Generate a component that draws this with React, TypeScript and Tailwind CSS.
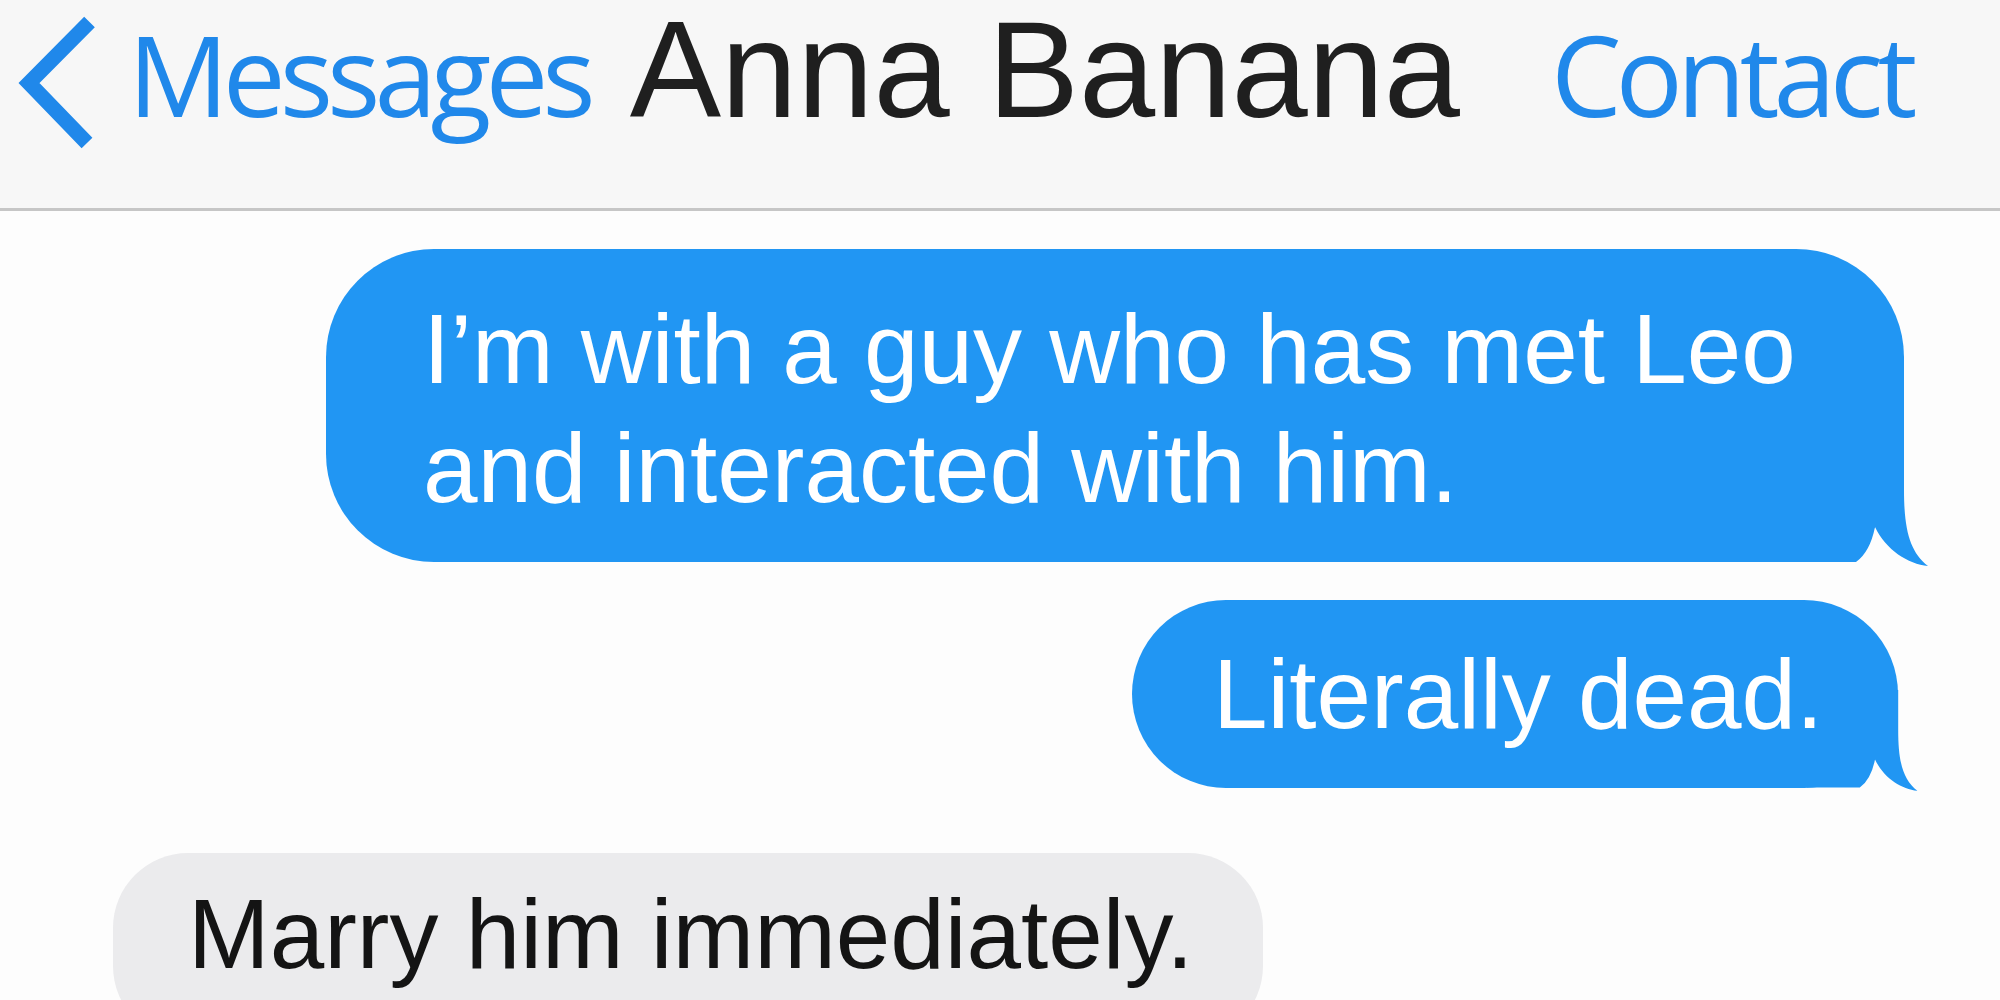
import React from 'react';

const sans = "font-['Liberation_Sans',Arial,sans-serif]";
const ui = "font-['Open_Sans',sans-serif] text-[112px] leading-[1.3] tracking-[-6px] text-[#2088ea]";

// iMessage style tail, drawn in a 140x130 box whose point (114,122) sits on the bubble's bottom-right corner
const Tail: React.FC<{ className: string; color: string }> = ({ className, color }) => (
  <svg className={className} viewBox="0 0 140 130" preserveAspectRatio="none">
    <path
      d="M0 0 L114 0 L114 50 C114 90 120 112 138 126 C118 124 96 110 85 87 Q80 112 66 122 L0 122 Z"
      fill={color}
    />
  </svg>
);

const Header: React.FC = () => (
  <div className="flex h-[211px] border-b-[3px] border-[#c6c6c6] bg-[#f7f7f7]">
    <svg className="shrink-0" width={100} height={160} viewBox="0 0 100 160">
      <polyline
        points="89.5,22 29,83 87,143"
        fill="none"
        stroke="#2088ea"
        strokeWidth={15}
        strokeLinecap="butt"
        strokeLinejoin="miter"
      />
    </svg>
    <div className="flex items-baseline self-end pb-[61px]">
      <span className={`ml-[28px] ${ui}`}>Messages</span>
      <span className={`ml-[40px] ${sans} text-[137px] leading-[140px] text-[#1f1f1f]`}>Anna Banana</span>
      <span className={`ml-[91px] ${ui}`}>Contact</span>
    </div>
  </div>
);

export default function App() {
  return (
    <div className={`h-[1000px] w-[2000px] overflow-hidden bg-[#fdfdfd] ${sans}`}>
      <Header />
      <div className="flex flex-col pt-[38px] text-[98px] leading-[119px]">
        {/* Sent: two lines */}
        <div className="relative mr-[96px] w-[1578px] self-end rounded-[108px] bg-[#2196f3] pb-[34px] pl-[97px] pt-[41px] text-white">
          <span className="relative z-10">
            I’m with a guy who has met Leo
            <br />
            and interacted with him.
          </span>
          <Tail className="absolute -bottom-[8px] -right-[26px] h-[130px] w-[140px]" color="#2196f3" />
        </div>

        {/* Sent: one line */}
        <div className="relative mr-[102px] mt-[38px] w-[766px] self-end rounded-[94px] bg-[#2196f3] pb-[34px] pl-[81px] pt-[35px] text-white">
          <span className="relative z-10 whitespace-nowrap">Literally dead.</span>
          <Tail className="absolute -bottom-[6px] -right-[21px] h-[104px] w-[112px]" color="#2196f3" />
        </div>

        {/* Received */}
        <div className="ml-[113px] mt-[65px] h-[188px] w-[1150px] rounded-[75px] bg-[#ebebed] pl-[75px] pt-[22px] text-[#141414]">
          <span className="whitespace-nowrap">Marry him immediately.</span>
        </div>
      </div>
    </div>
  );
}
